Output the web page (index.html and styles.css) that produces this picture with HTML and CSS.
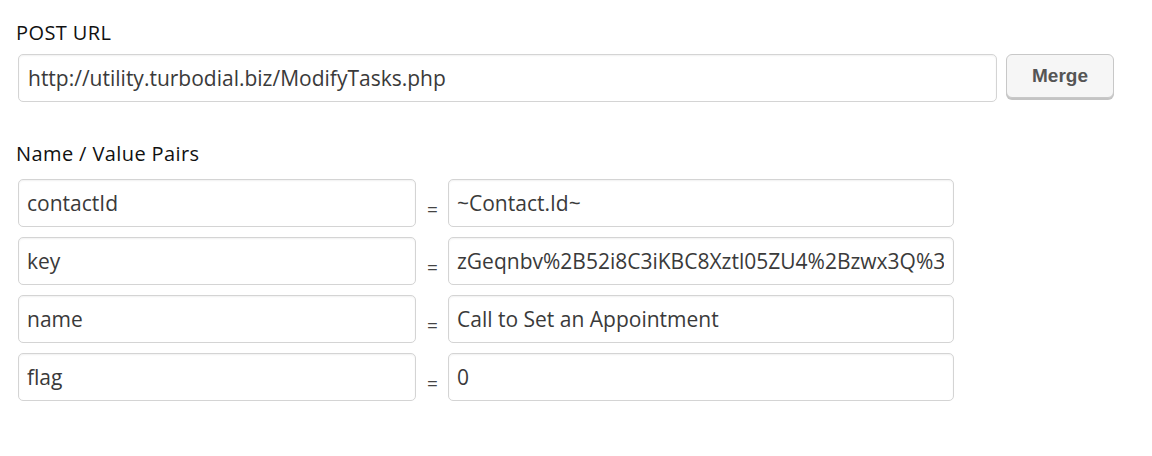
FILE: index.html
```html
<!DOCTYPE html>
<html>
<head>
<meta charset="utf-8">
<link rel="stylesheet" href="styles.css">
</head>
<body>
<div class="page">
  <div class="field-label">POST URL</div>
  <div class="url-row">
    <input class="text-input url-input" type="text" value="http://utility.turbodial.biz/ModifyTasks.php">
    <button class="merge-btn" type="button">Merge</button>
  </div>
  <div class="field-label pairs-label">Name / Value Pairs</div>
  <div class="pairs">
    <input class="text-input" type="text" value="contactId">
    <span class="eq">=</span>
    <input class="text-input" type="text" value="~Contact.Id~">
    <input class="text-input" type="text" value="key">
    <span class="eq">=</span>
    <input class="text-input" type="text" value="zGeqnbv%2B52i8C3iKBC8Xztl05ZU4%2Bzwx3Q%3D%3D">
    <input class="text-input" type="text" value="name">
    <span class="eq">=</span>
    <input class="text-input" type="text" value="Call to Set an Appointment">
    <input class="text-input" type="text" value="flag">
    <span class="eq">=</span>
    <input class="text-input" type="text" value="0">
  </div>
</div>
</body>
</html>
```
FILE: styles.css
```css
* { box-sizing: border-box; }
html, body { margin: 0; padding: 0; background: #ffffff; }
body { font-family: "Open Sans", "Liberation Sans", sans-serif; color: #000; }
.page { padding: 21px 18px 0 18px; }
.field-label {
  font-size: 20px;
  line-height: 24px;
  letter-spacing: 0.4px;
  color: #111;
  margin-left: -2px;
  margin-bottom: 9px;
}
.url-row {
  display: flex;
  align-items: flex-start;
  gap: 9px;
}
.text-input {
  font-family: "Open Sans", "Liberation Sans", sans-serif;
  font-size: 21px;
  color: #3a3a3a;
  height: 48px;
  padding: 0 9px;
  border: 1px solid #d4d4d4;
  border-radius: 5px;
  background: #fff;
  box-shadow: inset 0 1px 2px rgba(0,0,0,0.06);
  outline: none;
  min-width: 0;
}
.url-input { width: 979px; }
.merge-btn {
  width: 108px;
  height: 44px;
  font-family: "Liberation Sans", Arial, sans-serif;
  font-weight: bold;
  font-size: 19px;
  color: #555;
  background: #f6f6f6;
  border: 1px solid #c8c8c8;
  border-radius: 6px;
  box-shadow: 0 2px 0 #c4c4c4;
  padding: 0;
}
.pairs-label { margin-top: 40px; margin-bottom: 13px; }
.pairs {
  display: grid;
  grid-template-columns: 398px 32px 506px;
  grid-auto-rows: 48px;
  row-gap: 10px;
  align-items: center;
}
.pairs .text-input { width: 100%; padding-left: 8px; }
.eq {
  font-size: 19px;
  color: #444;
  text-align: center;
  padding-top: 12px;
  padding-left: 1px;
}
```
